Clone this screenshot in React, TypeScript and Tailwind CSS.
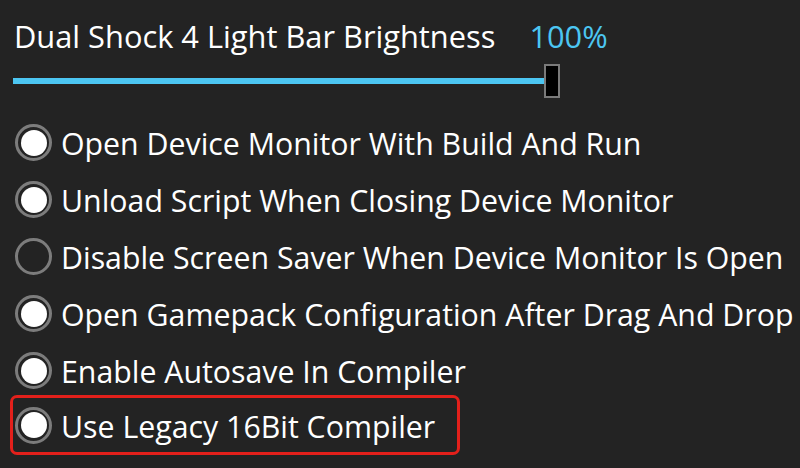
import React from "react";

const items = [
  { label: "Open Device Monitor With Build And Run", checked: true },
  { label: "Unload Script When Closing Device Monitor", checked: true },
  { label: "Disable Screen Saver When Device Monitor Is Open", checked: false },
  { label: "Open Gamepack Configuration After Drag And Drop", checked: true },
  { label: "Enable Autosave In Compiler", checked: true },
];

function Radio({ checked }: { checked: boolean }) {
  return (
    <div className="w-[37px] h-[37px] shrink-0 rounded-full border-[3px] border-[#7c7c7c] flex items-center justify-center">
      {checked && <div className="w-[26px] h-[26px] rounded-full bg-white" />}
    </div>
  );
}

export default function App() {
  const font = { fontFamily: '"Open Sans", "Noto Sans", sans-serif' };
  return (
    <div className="w-[800px] h-[468px] bg-[#232323] overflow-hidden pl-[13px] pt-[17px] text-white" style={font}>
      <div className="h-[38px] flex items-center text-[30.8px] leading-none">
        <span className="pl-[1px]">Dual Shock 4 Light Bar Brightness</span>
        <span className="ml-[34px] text-[#4cc6f2]">100%</span>
      </div>
      <div className="mt-[9px] h-[34px] flex items-center">
        <div className="w-[532px] h-[6px] bg-[#4cc6f2]" />
        <div className="w-[16px] h-[34px] bg-black border-2 border-[#7a7a7a] -ml-px" />
      </div>
      <div className="mt-[16px] flex flex-col">
        {items.map((it) => (
          <div key={it.label} className="h-[57px] flex items-center pl-[2px] gap-[9px] text-[30.3px] leading-none whitespace-nowrap">
            <Radio checked={it.checked} />
            <span className="pt-[4px]">{it.label}</span>
          </div>
        ))}
        <div className="-mt-[4px] -ml-[3px] w-[450px] h-[60px] border-[3px] border-[#e3201b] rounded-[7px] flex items-center pl-[2px] gap-[9px] text-[30.3px] leading-none whitespace-nowrap">
          <Radio checked={true} />
          <span className="pt-[4px]">Use Legacy 16Bit Compiler</span>
        </div>
      </div>
    </div>
  );
}
